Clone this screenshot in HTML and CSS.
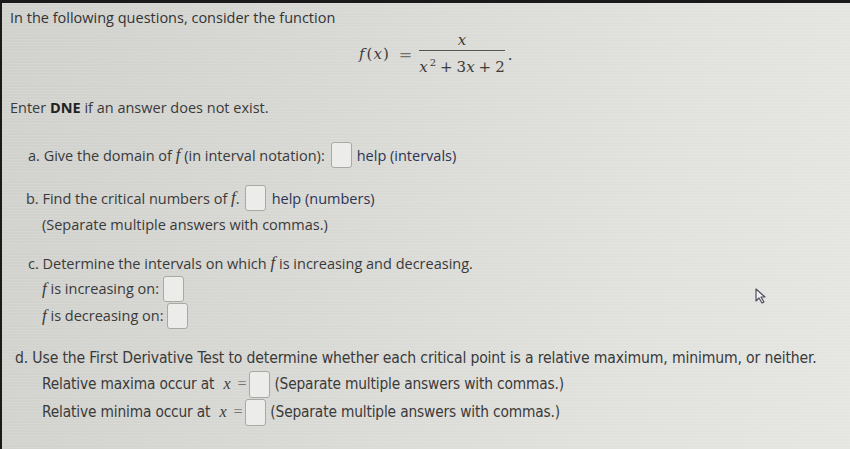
FILE: index.html
```html
<!DOCTYPE html>
<html>
<head>
<meta charset="utf-8">
<link rel="stylesheet" href="styles.css">
</head>
<body>
<div class="screen">
  <p class="intro">In the following questions, consider the function</p>
  <div class="formula">
    <span class="fx"><span class="mi">f</span><span class="mo">(</span><span class="mi">x</span><span class="mo">)</span></span><span class="eq">=</span><span class="frac"><span class="num"><span class="mi">x</span></span><span class="den"><span class="mi">x</span><sup>2</sup><span class="op">+</span>3<span class="mi">x</span><span class="op">+</span>2</span></span><span class="dot">.</span>
  </div>
  <p class="dne">Enter <b>DNE</b> if an answer does not exist.</p>

  <div class="part a">
    <div class="row">a. Give the domain of <i class="fi">f</i>&nbsp;(in interval notation):<span class="box"></span><span class="help">help (intervals)</span></div>
  </div>

  <div class="part b">
    <div class="row">b. Find the critical numbers of <i class="fi">f</i>.<span class="box"></span><span class="help">help (numbers)</span></div>
    <div class="row sub">(Separate multiple answers with commas.)</div>
  </div>

  <div class="part c">
    <div class="row">c. Determine the intervals on which <i class="fi">f</i> is increasing and decreasing.</div>
    <div class="row sub"><i class="fi">f</i> is increasing on:<span class="box"></span></div>
    <div class="row sub"><i class="fi">f</i> is decreasing on:<span class="box"></span></div>
  </div>

  <div class="part d">
    <div class="row">d. Use the First Derivative Test to determine whether each critical point is a relative maximum, minimum, or neither.</div>
    <div class="row sub">Relative maxima occur at <span class="mi">x</span><span class="eqs">=</span><span class="box"></span>(Separate multiple answers with commas.)</div>
    <div class="row sub">Relative minima occur at <span class="mi">x</span><span class="eqs">=</span><span class="box"></span>(Separate multiple answers with commas.)</div>
  </div>

  <svg class="cursor" width="14" height="16" viewBox="0 0 14 16">
    <path d="M2 1 L2 13 L5 10 L8 15 L10 14 L7 9 L11 9 Z" fill="#f0f0f0" stroke="#505060" stroke-width="1.2" stroke-linejoin="round"/>
  </svg>
</div>
</body>
</html>
```

FILE: styles.css
```css
html, body {
  margin: 0;
  padding: 0;
  width: 850px;
  height: 449px;
  overflow: hidden;
  background: #1a1a1a;
}
.screen {
  position: relative;
  box-sizing: border-box;
  width: 850px;
  height: 449px;
  margin-top: 3px;
  margin-left: 2px;
  background:
    repeating-linear-gradient(180deg, rgba(255,255,255,0.10) 0px, rgba(255,255,255,0.10) 1px, rgba(0,0,0,0) 1px, rgba(0,0,0,0) 3px),
    linear-gradient(100deg, #d0d0cc 0%, #d8d8d4 40%, #e1e1dd 75%, #e5e5e1 100%);
  font-family: "Open Sans", "Liberation Sans", sans-serif;
  color: #3a3a3a;
  font-size: 14.5px;
  padding-top: 4px;
}
p { margin: 0; }
.intro {
  padding-left: 8px;
  line-height: 22px;
  color: #333;
}
.formula {
  display: flex;
  align-items: center;
  margin-left: 356px;
  margin-top: 1px;
  font-family: "DejaVu Serif", "Liberation Serif", serif;
  font-size: 15px;
  color: #3c3c3c;
}
.mi { font-style: italic; }
.fx .mi:first-child { margin-right: 2px; }
.fx .mi { margin: 0 1px; }
.eq { margin: 0 7px 0 10px; color: #707070; font-size: 16px; }
.frac {
  display: inline-flex;
  flex-direction: column;
  align-items: stretch;
}
.num {
  line-height: 20px;
  border-bottom: 1px solid #555;
  text-align: center;
}
.den { line-height: 22px; padding: 1px 0 0; }
.den sup { font-size: 10px; vertical-align: 6px; margin-left: 2px; }
.op { margin: 0 4px; }
.dot { margin-left: 3px; align-self: flex-start; margin-top: 16px; }
.dne {
  padding-left: 8px;
  margin-top: 20px;
  line-height: 20px;
}
.dne b { color: #222; font-weight: 700; }
.part .row {
  display: flex;
  align-items: center;
  white-space: pre;
}
.fi {
  font-family: "Liberation Serif", serif;
  font-style: italic;
  font-size: 17px;
}
.box {
  display: inline-block;
  box-sizing: border-box;
  width: 21px;
  height: 26px;
  border: 1px solid #a8a8a4;
  border-radius: 3px;
  background: #ececea;
}
.help { color: #2c3556; }
.a { margin-top: 24px; padding-left: 26px; }
.a .row { height: 26px; }
.a .box { margin: 0 5px 0 6px; }
.b { margin-top: 17px; padding-left: 24px; }
.b .row { height: 26px; }
.b .box { margin: 0 6px 0 5px; }
.b .sub { padding-left: 16px; height: 24px; margin-top: 1px; }
.c { margin-top: 15px; padding-left: 26px; }
.c .row { height: 24px; }
.c .sub { padding-left: 14px; height: 27px; }
.c .sub .box { margin-left: 4px; }
.d {
  margin-top: 17px;
  padding-left: 13px;
  font-family: "DejaVu Sans Condensed", "DejaVu Sans", "Open Sans", sans-serif;
  font-stretch: condensed;
  font-size: 15.6px;
  letter-spacing: -0.15px;
}
.d .row { height: 24px; }
.d .sub { padding-left: 27px; height: 28px; font-size: 15.3px; }
.d .sub .mi { font-family: "Liberation Serif", serif; font-size: 16px; margin-left: 5px; }
.eqs { font-family: "Liberation Serif", serif; color: #777; margin: 0 0 0 7px; font-size: 16px; }
.d .sub .box { margin: 0 4px 0 3px; height: 27px; }
.cursor {
  position: absolute;
  left: 752px;
  top: 285px;
}
```
